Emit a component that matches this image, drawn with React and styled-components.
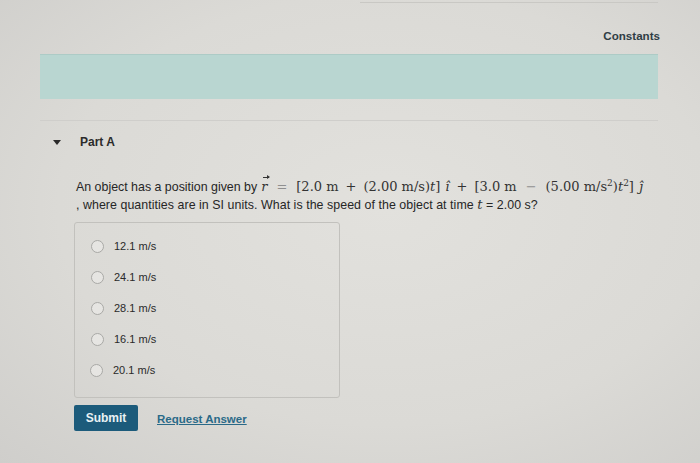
import React from 'react'
import styled, { createGlobalStyle } from 'styled-components'

const GlobalStyle = createGlobalStyle`
  html, body { margin: 0; padding: 0; }
  body {
    width: 700px;
    height: 463px;
    overflow: hidden;
    background: radial-gradient(ellipse at 55% 45%, #e2e1dd 0%, #dbdad6 60%, #cfcecb 100%);
    font-family: "Liberation Sans", Arial, sans-serif;
    color: #2b2b2b;
  }
`

const Page = styled.div`
  width: 700px;
  height: 463px;
  box-sizing: border-box;
  padding: 0 42px 0 40px;
`

const TopRule = styled.div`
  margin-left: 320px;
  height: 2px;
  border-bottom: 1px solid #c9c8c4;
`

const ConstantsRow = styled.div`
  display: flex;
  justify-content: flex-end;
  padding: 26px 0 0;
  height: 25px;
`

const ConstantsLink = styled.span`
  font-size: 11.6px;
  font-weight: 700;
  color: #2f3d45;
  margin-right: -2px;
`

const Banner = styled.div`
  height: 44px;
  background: #b9d6d1;
  border-top: 1px solid #adcbc6;
`

const Divider = styled.div`
  margin-top: 21px;
  height: 1px;
  background: #cfcecb;
`

const PartHeader = styled.div`
  display: flex;
  align-items: center;
  margin-top: 14px;
  padding-left: 13px;
  height: 14px;
`

const Caret = styled.span`
  width: 0;
  height: 0;
  border-left: 4px solid transparent;
  border-right: 4px solid transparent;
  border-top: 5px solid #2a2a2a;
  margin-right: 19px;
`

const PartTitle = styled.span`
  font-size: 12px;
  font-weight: 700;
  color: #2b2b2b;
`

const Question = styled.div`
  margin-top: 29px;
  padding-left: 36px;
  font-size: 12.4px;
  line-height: 18px;
  color: #262626;
  white-space: nowrap;
`

const SecondLine = styled.span`
  letter-spacing: 0.05px;
`

const Math = styled.span`
  font-family: "DejaVu Serif", "Liberation Serif", serif;
  font-size: 13px;
  color: #333;
`

const Op = styled.span`
  font-family: "DejaVu Serif", "Liberation Serif", serif;
  font-size: 13px;
  color: ${(p) => (p.$light ? '#8f8f8f' : '#333')};
  padding: 0 ${(p) => p.$pad ?? 7}px;
`

const Sup = styled.sup`
  font-size: 9px;
  line-height: 0;
  vertical-align: 5px;
`

const Unit = styled.i`
  margin-left: 5px;
`

const Vec = styled.span`
  position: relative;
  display: inline-block;
  margin-left: 4px;
  &::before {
    content: '';
    position: absolute;
    left: 2px;
    top: -1px;
    width: 6px;
    height: 1px;
    background: #333;
  }
  &::after {
    content: '';
    position: absolute;
    left: 6px;
    top: -3px;
    border-left: 3px solid #333;
    border-top: 2.5px solid transparent;
    border-bottom: 2.5px solid transparent;
  }
`

const AnswerBox = styled.div`
  margin: 8px 0 0 34px;
  width: 266px;
  height: 176px;
  box-sizing: border-box;
  border: 1px solid #c2c1bd;
  border-radius: 3px;
  padding: 14px 0 0 16px;
  display: flex;
  flex-direction: column;
  gap: 13px;
`

const Option = styled.label`
  display: flex;
  align-items: center;
  height: 18px;
  font-size: 11px;
  color: #2a2a2a;
`

const Radio = styled.span`
  width: 11px;
  height: 11px;
  border-radius: 50%;
  border: 1.5px solid #a9a9a6;
  background: #e6e5e2;
  margin-right: 10px;
  margin-left: ${(p) => p.$shift || 0}px;
`

const Actions = styled.div`
  display: flex;
  align-items: center;
  margin: 7px 0 0 34px;
  gap: 19px;
`

const SubmitButton = styled.button`
  width: 64px;
  height: 26px;
  border: none;
  border-radius: 2px;
  background: #1c5b7b;
  color: #e9f1f4;
  font-family: "Liberation Sans", Arial, sans-serif;
  font-size: 12px;
  font-weight: 700;
  padding: 0;
`

const RequestLink = styled.a`
  font-size: 11.5px;
  font-weight: 700;
  color: #2a6a88;
  text-decoration: underline;
  margin-top: 2px;
`

const options = ['12.1 m/s', '24.1 m/s', '28.1 m/s', '16.1 m/s', '20.1 m/s']

export default function App() {
  return (
    <>
      <GlobalStyle />
      <Page>
        <TopRule />
        <ConstantsRow>
          <ConstantsLink>Constants</ConstantsLink>
        </ConstantsRow>
        <Banner />
        <Divider />
        <PartHeader>
          <Caret />
          <PartTitle>Part A</PartTitle>
        </PartHeader>
        <Question>
          An object has a position given by<Math><Vec><i>r</i></Vec></Math>
          <Op $light $pad={9}>=</Op>
          <Math>[2.0 m</Math>
          <Op $pad={7}>+</Op>
          <Math>(2.00 m/s)<i>t</i>]<Unit>î</Unit></Math>
          <Op $pad={7}>+</Op>
          <Math>[3.0 m</Math>
          <Op $light $pad={9}>−</Op>
          <Math>(5.00 m/s<Sup>2</Sup>)<i>t</i><Sup>2</Sup>]<Unit>ĵ</Unit></Math>
          <br />
          <SecondLine>
            , where quantities are in SI units. What is the speed of the object at time <Math><i>t</i></Math> = 2.00 s?
          </SecondLine>
        </Question>
        <AnswerBox>
          {options.map((o, i) => (
            <Option key={o}>
              <Radio $shift={i === 4 ? -1 : 0} />
              {o}
            </Option>
          ))}
        </AnswerBox>
        <Actions>
          <SubmitButton>Submit</SubmitButton>
          <RequestLink>Request Answer</RequestLink>
        </Actions>
      </Page>
    </>
  )
}
